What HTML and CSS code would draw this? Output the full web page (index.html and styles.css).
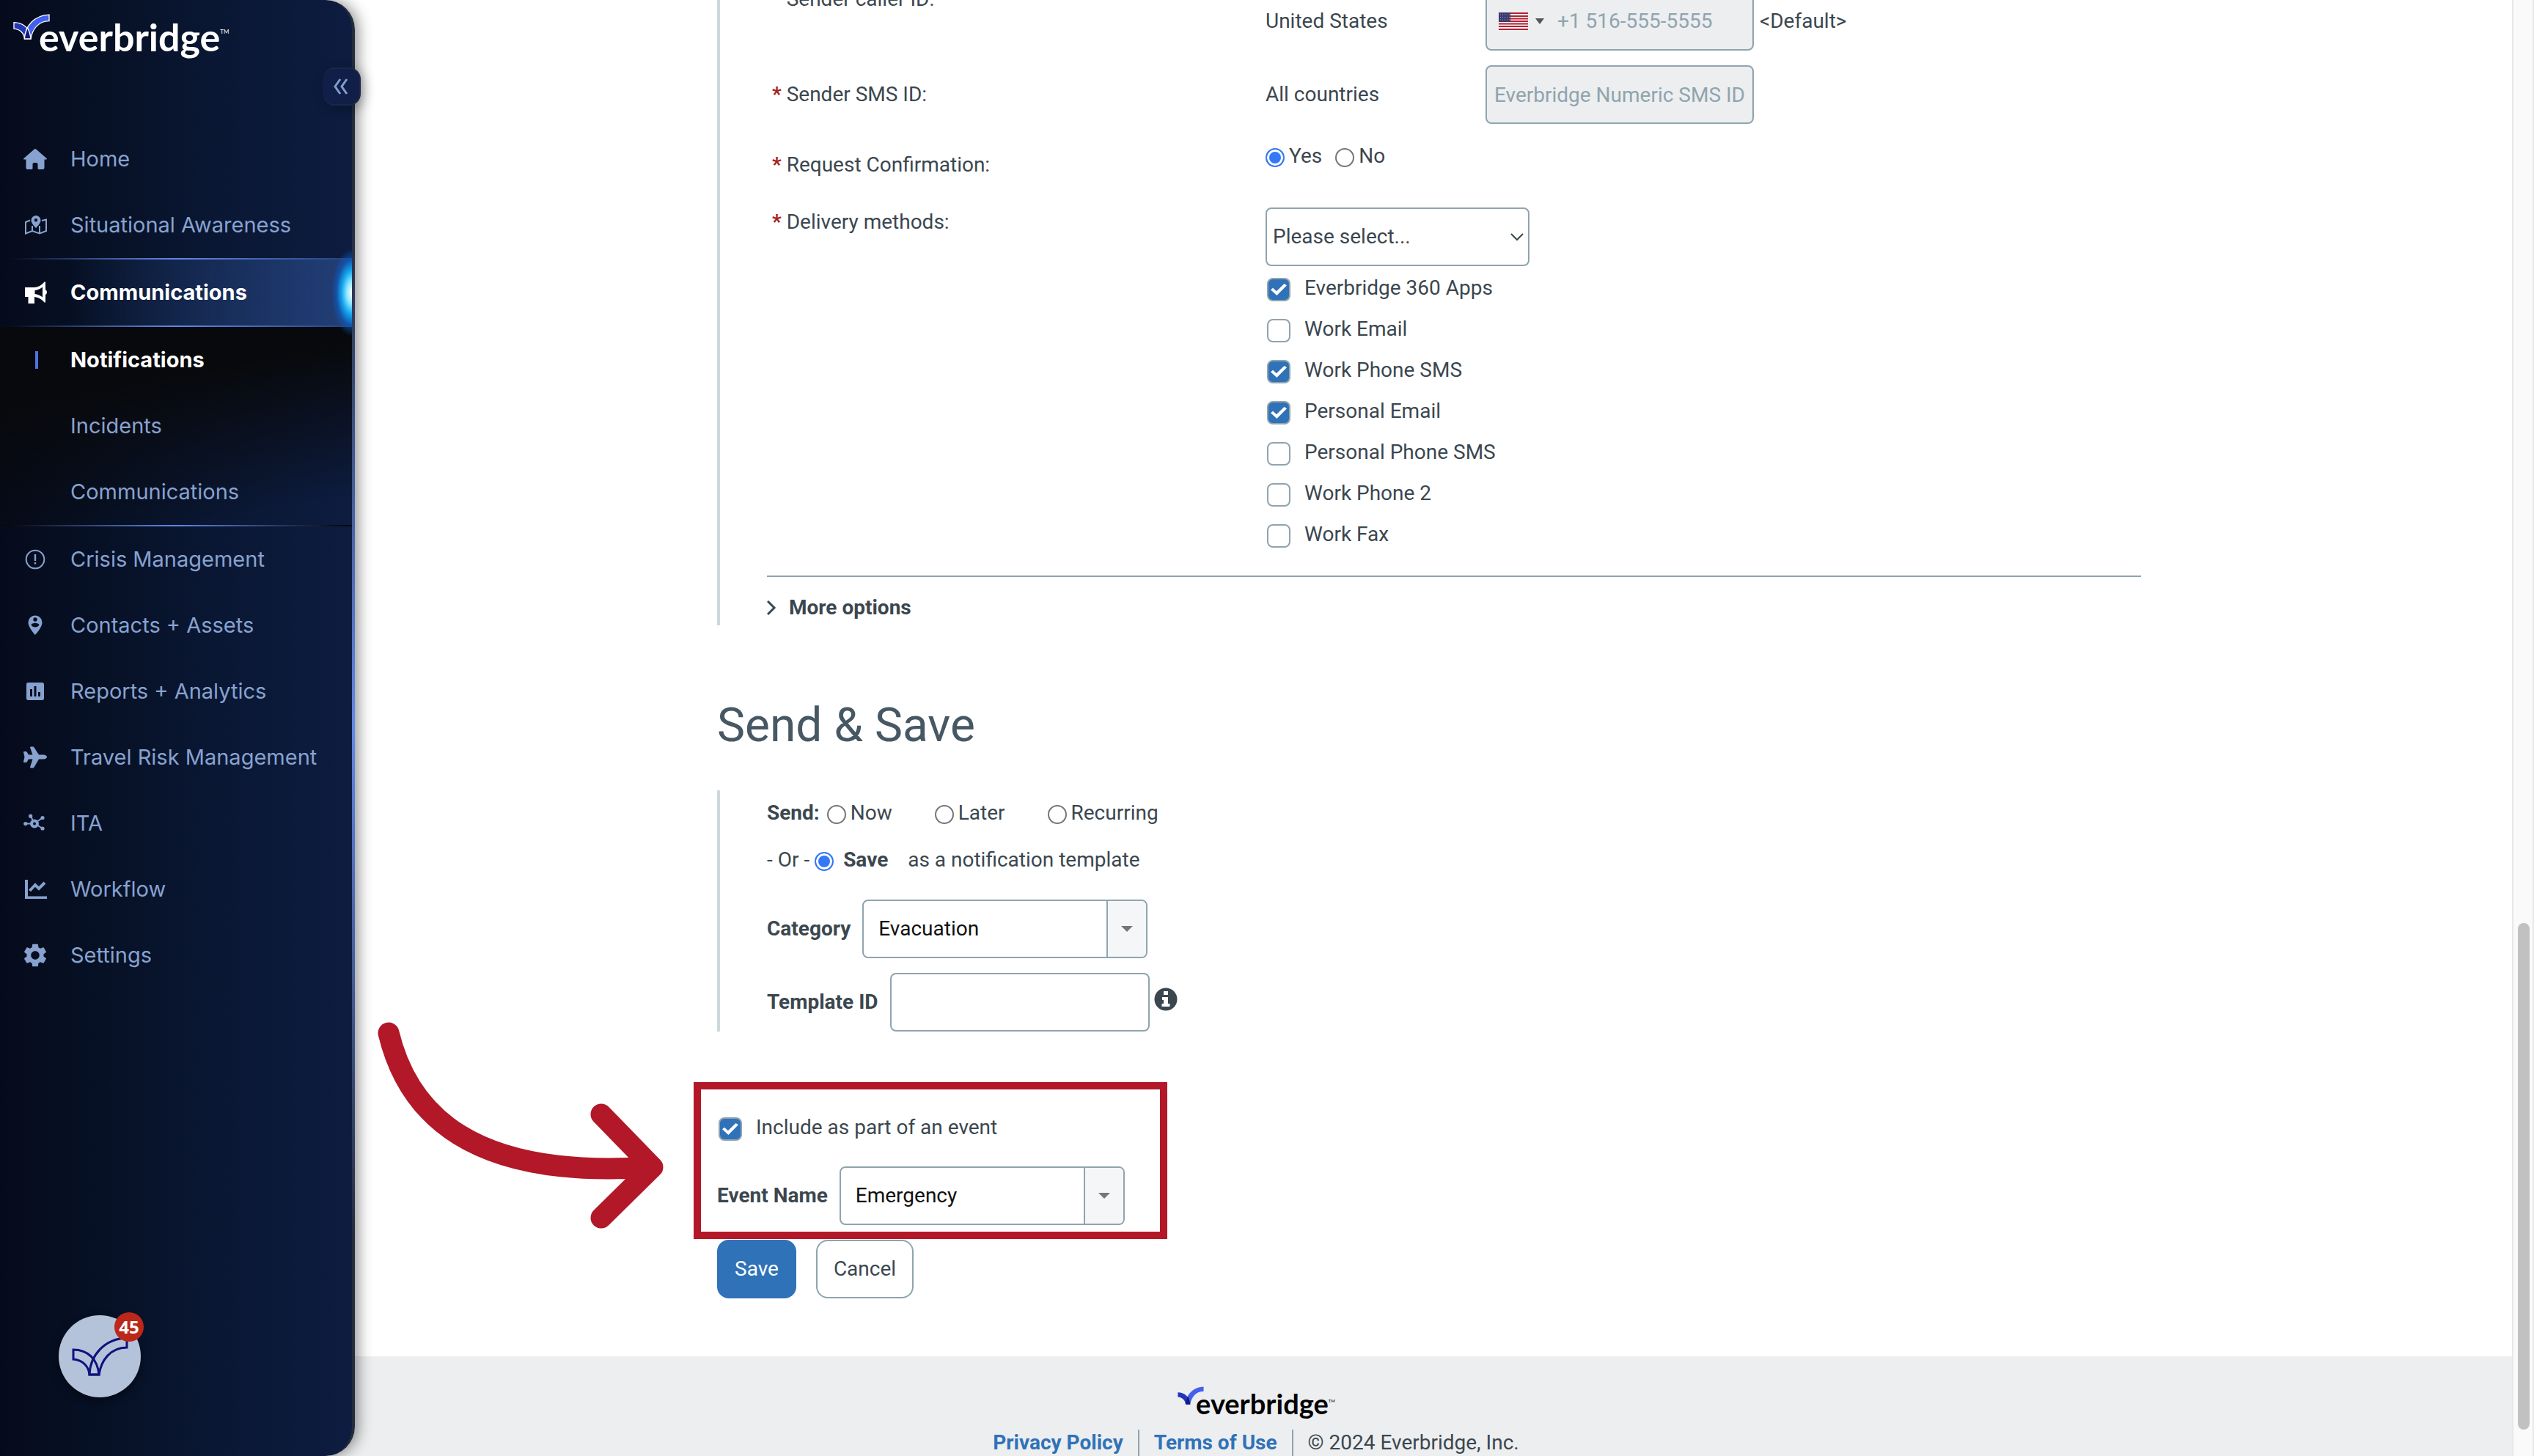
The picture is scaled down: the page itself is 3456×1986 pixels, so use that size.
FILE: index.html
```html
<!DOCTYPE html>
<html lang="en">
<head>
    <meta charset="UTF-8">
    <meta name="viewport" content="width=device-width, initial-scale=1.0">
    <title>Everbridge - Notification Template</title>
    <link rel="stylesheet" href="styles.css">
</head>
<body>
    <!-- Shared shapes -->
    <svg class="defs" width="0" height="0" aria-hidden="true">
        <symbol id="mark" viewBox="17 28 79 56">
            <path class="mark-left" d="M20 47V60C33 61 41 70 42 81H55C53 60 40 47 20 47Z"/>
            <path class="mark-right" d="M93 31V44C70 44 58 62 55 81H42C43 55 62 32 93 31Z"/>
            <path class="mark-base" d="M48 58C45 65 42 72 42 81H55C54 72 52 65 48 58Z"/>
        </symbol>
        <symbol id="mark-outline" viewBox="17 28 79 56">
            <path d="M20 47V60C33 61 41 70 42 81H55C53 60 40 47 20 47Z"/>
            <path d="M93 31V44C70 44 58 62 55 81H42C43 55 62 32 93 31Z"/>
        </symbol>
    </svg>

    <div class="shell">
        <aside class="sidebar">
            <a class="logo" href="#">
                <svg class="logo-mark"><use href="#mark"/></svg>
                <span class="logo-text">everbridge</span><span class="logo-tm">TM</span>
            </a>
            <button class="collapse" type="button" aria-label="Collapse menu">
                <svg width="20" height="22" viewBox="0 0 20 22"><path d="M9 1L2 11l7 10M18 1l-7 10 7 10"/></svg>
            </button>

            <nav class="menu">
                <a class="item" href="#">
                    <svg class="icon" viewBox="0 0 32 32"><path d="M14.800 2.500q1.200-1 2.400 0L31.500 15q.9 1 0 1.500H28.500V28q0 2-2 2H21q-1.500 0-1.500-1.500V23q0-2-2-2h-3q-2 0-2 2v5.500Q12.500 30 11 30H5.500q-2 0-2-2V16.500H.5q-.9-.5 0-1.500z"/></svg>
                    Home
                </a>
                <a class="item" href="#">
                    <svg class="icon" viewBox="0 0 32 32"><path class="line" d="M9 9.500L3 12v15.500l9-3.500 10 3.500 9-3.500V8.500L25 10M12 17v7M22 17v10"/><path d="M17 3a6.500 6.500 0 0 0-6.500 6.500C10.500 14 17 20 17 20s6.500-6 6.500-10.500A6.500 6.500 0 0 0 17 3zm0 4a2.200 2.200 0 1 1 0 4.400A2.200 2.200 0 0 1 17 7z"/></svg>
                    Situational Awareness
                </a>
                <a class="item active" href="#">
                    <svg class="icon" viewBox="0 0 32 32"><path fill-rule="evenodd" d="M2 9h12c6 0 11-3 14.500-7.500H30V12q2 1 2 3.500T30 19v10.500h-1.500C25 25 20 22.500 15 22V31H6.500V22H2zM15.500 13v5c4 .5 7.500 2 10.500 4.500v-14c-3 2.500-6.500 4-10.500 4.500z"/></svg>
                    Communications
                </a>
                <div class="submenu">
                    <a class="item current" href="#">Notifications</a>
                    <a class="item" href="#">Incidents</a>
                    <a class="item" href="#">Communications</a>
                </div>
                <a class="item" href="#">
                    <svg class="icon" viewBox="0 0 32 32"><circle class="line" cx="16" cy="16" r="12.300"/><path d="M14.800 9h2.400v9h-2.400zM14.800 20h2.400v2.600h-2.400z"/></svg>
                    Crisis Management
                </a>
                <a class="item" href="#">
                    <svg class="icon" viewBox="0 0 32 32"><path d="M16 2.500a9.500 9.500 0 0 0-9.500 9.500C6.500 19 16 29 16 29s9.500-10 9.500-17A9.500 9.500 0 0 0 16 2.500zm0 2.800a2.700 2.700 0 1 1 0 5.400 2.700 2.700 0 0 1 0-5.400zm0 13.200c-2.300 0-4.300-1.200-5.500-3 0-1.800 3.700-2.800 5.500-2.800s5.500 1 5.500 2.800c-1.200 1.800-3.200 3-5.500 3z"/></svg>
                    Contacts + Assets
                </a>
                <a class="item" href="#">
                    <svg class="icon" viewBox="0 0 32 32"><path d="M6.500 4h19Q28 4 28 6.500v19q0 2.500-2.500 2.500h-19Q4 28 4 25.500v-19Q4 4 6.500 4zM9 13v10h3V13zm5.500-4v14h3V9zM20 17v6h3v-6z"/></svg>
                    Reports + Analytics
                </a>
                <a class="item" href="#">
                    <svg class="icon" viewBox="0 0 32 32"><path d="M12.500 12.500L9 2.500Q9 1.500 10 1.500h3q1 0 1.500 1l6.500 10h7q4 1 4 3t-4 3h-7l-6.500 11q-.5 1-1.500 1h-3q-1 0-1-1l3.500-11H7l-2.500 4q-.5.500-1 .5H1q-1 0-1-1l1.500-6.500L0 9q0-1 1-1h2.500q.5 0 1 .5l2.500 4z"/></svg>
                    Travel Risk Management
                </a>
                <a class="item" href="#">
                    <svg class="icon" viewBox="0 0 32 32"><path class="line" d="M3 16.500h8M10 6.500l3 6M26 8.500l-8 5.500M26 23l-8-5"/><circle class="ring" cx="15" cy="16.500" r="4"/><circle cx="2.800" cy="16.500" r="2.600"/><circle cx="9.700" cy="6.200" r="2.600"/><circle cx="26" cy="8.500" r="2.600"/><circle cx="26" cy="23" r="2.600"/></svg>
                    ITA
                </a>
                <a class="item" href="#">
                    <svg class="icon" viewBox="0 0 32 32"><path d="M2 3h4v22.500h26V29H2z"/><path class="zigzag" d="M8.500 18l7.500-8 5 5 8-8"/></svg>
                    Workflow
                </a>
                <a class="item" href="#">
                    <svg class="icon" viewBox="2 2 20 20"><path d="M19.140 12.940c.04-.3.06-.61.06-.94 0-.32-.02-.64-.07-.94l2.030-1.580c.18-.14.23-.41.12-.61l-1.920-3.320c-.12-.22-.37-.29-.59-.22l-2.390.96c-.5-.38-1.030-.7-1.620-.94l-.36-2.540c-.04-.24-.24-.41-.48-.41h-3.840c-.24 0-.43.17-.47.41l-.36 2.540c-.59.24-1.130.57-1.620.94l-2.390-.96c-.22-.08-.47 0-.59.22L2.740 8.870c-.12.21-.08.47.12.61l2.030 1.580c-.05.3-.09.63-.09.940s.02.64.07.94l-2.030 1.580c-.18.14-.23.41-.12.61l1.920 3.320c.12.22.37.29.59.22l2.390-.96c.5.38 1.030.7 1.620.94l.36 2.540c.05.24.24.41.48.41h3.840c.24 0 .44-.17.47-.41l.36-2.540c.59-.24 1.130-.56 1.620-.94l2.390.96c.22.08.47 0 .59-.22l1.920-3.320c.12-.22.07-.47-.12-.61l-2.010-1.580zM12 15.600c-1.980 0-3.600-1.620-3.600-3.600s1.620-3.600 3.600-3.600 3.600 1.620 3.600 3.600-1.620 3.600-3.600 3.600z"/></svg>
                    Settings
                </a>
            </nav>

            <button class="assist" type="button" aria-label="Messages">
                <svg class="assist-mark"><use href="#mark-outline"/></svg>
                <span class="badge">45</span>
            </button>
        </aside>

        <div class="page">
            <main class="main">
                <section class="section options">
                    <div class="row">
                        <span class="row-label"><span class="req">*</span> Sender caller ID:</span>
                        <div class="caller">
                            <label class="country" for="caller-id">United States</label>
                            <div class="phone">
                                <svg width="40" height="24" viewBox="0 0 40 24">
                                    <rect width="40" height="24" fill="#f5f5f5"/>
                                    <path d="M0 1h40M0 5h40M0 8.500h40M0 12h40M0 15.500h40M0 19h40M0 23h40" stroke="#b22234" stroke-width="2"/>
                                    <rect width="16" height="13" fill="#3c3b6e"/>
                                    <path d="M2 3h13M2 6.500h13M2 10h13" stroke="#a5a5c8" stroke-dasharray="1 2"/>
                                </svg>
                                <svg width="12" height="8" viewBox="0 0 12 8"><path d="M0 0h12L6 8z" fill="#555"/></svg>
                                <input id="caller-id" type="tel" value="+1 516-555-5555" disabled>
                            </div>
                            <span>&lt;Default&gt;</span>
                        </div>
                    </div>
                    <div class="row row-middle">
                        <span class="row-label"><span class="req">*</span> Sender SMS ID:</span>
                        <div class="sms">
                            <label class="country" for="sms-id">All countries</label>
                            <input class="field" id="sms-id" type="text" value="Everbridge Numeric SMS ID" disabled>
                        </div>
                    </div>
                    <div class="row row-confirm">
                        <span class="row-label"><span class="req">*</span> Request Confirmation:</span>
                        <div class="choices">
                            <label class="choice"><input type="radio" name="confirm" checked> Yes</label>
                            <label class="choice"><input type="radio" name="confirm"> No</label>
                        </div>
                    </div>
                    <div class="row">
                        <label class="row-label" for="delivery"><span class="req">*</span> Delivery methods:</label>
                        <div>
                            <div class="dropdown">
                                <select id="delivery"><option>Please select...</option></select>
                                <svg class="dropdown-arrow" width="18" height="11" viewBox="0 0 18 11"><path d="M1 1l8 8 8-8"/></svg>
                            </div>
                            <div class="methods">
                                <label class="check"><input type="checkbox" checked> Everbridge 360 Apps</label>
                                <label class="check"><input type="checkbox"> Work Email</label>
                                <label class="check"><input type="checkbox" checked> Work Phone SMS</label>
                                <label class="check"><input type="checkbox" checked> Personal Email</label>
                                <label class="check"><input type="checkbox"> Personal Phone SMS</label>
                                <label class="check"><input type="checkbox"> Work Phone 2</label>
                                <label class="check"><input type="checkbox"> Work Fax</label>
                            </div>
                        </div>
                    </div>
                    <hr class="divider">
                    <button class="more" type="button">
                        <svg width="14" height="22" viewBox="0 0 14 22"><path d="M1 2l9 9-9 9"/></svg>
                        More options
                    </button>
                </section>

                <h1>Send &amp; Save</h1>

                <section class="section send">
                    <div class="send-row">
                        <strong>Send:</strong>
                        <label class="choice"><input type="radio" name="send"> Now</label>
                        <label class="choice"><input type="radio" name="send"> Later</label>
                        <label class="choice"><input type="radio" name="send"> Recurring</label>
                    </div>
                    <div class="save-row">
                        <span>- Or -</span>
                        <input id="save-template" type="radio" name="send" checked>
                        <label for="save-template"><strong>Save</strong> <span class="save-note">as a notification template</span></label>
                    </div>
                    <div class="pair">
                        <label for="category"><strong>Category</strong></label>
                        <div class="combo">
                            <select id="category"><option>Evacuation</option></select>
                            <span class="combo-arrow"></span>
                        </div>
                    </div>
                    <div class="pair">
                        <label for="template-id"><strong>Template ID</strong></label>
                        <input class="field template" id="template-id" type="text">
                        <svg class="info" width="32" height="32" viewBox="0 0 32 32"><circle cx="16" cy="16" r="15.500"/><path d="M13 5h6v5h-6zM11 13h8v9h2.500v4h-11v-4H13v-5h-2z" fill="#fff"/></svg>
                    </div>
                </section>

                <section class="event">
                    <svg class="pointer" width="392" height="286" viewBox="0 0 392 286" aria-hidden="true">
                        <path d="M16 16C42 124 126 216 372 199M306 127L376 199L306 268"/>
                    </svg>
                    <label class="check"><input type="checkbox" checked> Include as part of an event</label>
                    <div class="pair">
                        <label for="event-name"><strong>Event Name</strong></label>
                        <div class="combo">
                            <select id="event-name"><option>Emergency</option></select>
                            <span class="combo-arrow"></span>
                        </div>
                    </div>
                </section>

                <div class="actions">
                    <button class="btn primary" type="submit">Save</button>
                    <button class="btn" type="button">Cancel</button>
                </div>
            </main>

            <footer class="footer">
                <div class="logo footer-logo">
                    <svg class="logo-mark"><use href="#mark"/></svg>
                    <span class="logo-text">everbridge</span><span class="logo-tm">TM</span>
                </div>
                <div class="links">
                    <a href="#">Privacy Policy</a>
                    <a href="#">Terms of Use</a>
                    <span>© 2024 Everbridge, Inc.</span>
                </div>
            </footer>
        </div>

        <div class="scrollbar"><div class="thumb"></div></div>
    </div>
</body>
</html>
```
FILE: styles.css
```css
* {
    box-sizing: border-box;
}
body {
    margin: 0;
    font-family: Roboto, sans-serif;
    font-size: 28px;
    line-height: 36px;
    color: #3b474f;
    background: #fff;
}
input, select, button {
    font: inherit;
    color: inherit;
    margin: 0;
}
a {
    text-decoration: none;
}
strong {
    font-weight: 700;
}
.defs {
    display: block;
}

/* The sidebar shares the first cell with the page and floats above it */
.shell {
    display: grid;
    grid-template-columns: 1fr 30px;
    grid-template-rows: 100vh;
    height: 100vh;
    overflow: hidden;
}
.sidebar {
    grid-area: 1 / 1;
    z-index: 2;
    position: relative;
    width: 484px;
    display: flex;
    flex-direction: column;
    border-right: 4px solid transparent;
    border-radius: 0 40px 40px 0;
    background:
        linear-gradient(90deg, #060b1c, #061024 25%, #0a1733 60%, #0d1c40) padding-box,
        linear-gradient(180deg, #232b3c 15%, #6288e8 50%, #232b3c 85%) border-box;
    box-shadow: 4px 0 20px rgba(0, 0, 0, 0.45);
    font-family: Inter, sans-serif;
}
.page {
    grid-area: 1 / 1;
    display: flex;
    flex-direction: column;
    min-width: 0;
}

/* Logo */
.logo {
    display: flex;
    align-items: flex-start;
    color: #fff;
    padding: 18px 0 0 17px;
    height: 172px;
}
.logo-mark {
    width: 52px;
    height: 37px;
    margin-right: -16px;
    stroke: #fff;
    stroke-width: 2;
}
.mark-left {
    fill: #2137b8;
}
.mark-right {
    fill: #4361ee;
}
.mark-base {
    fill: #15187c;
}
.logo-text {
    font: 700 52px/64px Lato, sans-serif;
}
.logo-tm {
    font: 8px/10px Lato, sans-serif;
    padding-top: 20px;
}
.collapse {
    position: absolute;
    top: 92px;
    right: -12px;
    width: 52px;
    height: 52px;
    display: grid;
    place-items: center;
    padding: 0;
    border: 2px solid #1b2746;
    border-left: 0;
    border-radius: 16px;
    background: #111e48;
    box-shadow: 4px 4px 16px rgba(0, 0, 0, 0.3);
}
.collapse path {
    fill: none;
    stroke: #7f9dcc;
    stroke-width: 3;
}

/* Menu */
.menu {
    flex: 1;
    font-size: 29px;
}
.item {
    display: flex;
    align-items: center;
    gap: 32px;
    height: 90px;
    padding-left: 32px;
    color: #88a2cf;
}
.icon {
    width: 32px;
    height: 32px;
    fill: currentColor;
}
.icon .line, .icon .ring, .icon .zigzag {
    fill: none;
    stroke: currentColor;
    stroke-width: 2;
}
.icon .ring, .icon .zigzag {
    stroke-width: 4;
}
.item.active {
    position: relative;
    height: 94px;
    border: 2px solid;
    border-width: 2px 0;
    border-image: linear-gradient(90deg, transparent 3%, #6288e8 50%, #24407a) 1;
    background: linear-gradient(90deg, transparent 20%, #213d74 95%);
    color: #fff;
    font-weight: 700;
}
.item.active::after {
    content: "";
    position: absolute;
    top: -16px;
    bottom: -16px;
    right: 0;
    width: 28px;
    background: radial-gradient(ellipse 28px 60px at 100% 50%, #fff, #8fe9ff 25%, #12a5ee 50%, rgba(12, 96, 200, 0.6) 75%, transparent);
}
.submenu {
    border-bottom: 2px solid;
    border-image: linear-gradient(90deg, transparent 3%, #6288e8 50%, transparent 97%) 1;
    background: linear-gradient(170deg, #08090c 30%, rgba(8, 9, 12, 0) 90%);
}
.submenu .item {
    padding-left: 96px;
}
.submenu .current {
    gap: 44px;
    padding-left: 48px;
    color: #fff;
    font-weight: 700;
}
.current::before {
    content: "";
    width: 4px;
    height: 24px;
    background: #4f74e0;
}
.assist {
    position: relative;
    align-self: flex-start;
    display: grid;
    place-items: center;
    width: 112px;
    height: 112px;
    margin: 0 0 80px 80px;
    padding: 0;
    border: 0;
    border-radius: 50%;
    background: #b4c2da;
    box-shadow: 0 4px 12px rgba(0, 0, 0, 0.5);
}
.assist-mark {
    width: 79px;
    height: 56px;
    fill: none;
    stroke: #10127c;
    stroke-width: 3;
}
.badge {
    position: absolute;
    top: -4px;
    right: -4px;
    width: 40px;
    height: 40px;
    border-radius: 50%;
    background: #bb281a;
    color: #fff;
    font: 700 24px/40px "Open Sans", sans-serif;
}

/* Form */
.main {
    flex: 1 0 auto;
    margin-top: -19px;
    padding-left: 978px;
}
.section {
    width: 1942px;
    max-width: 100%;
    padding-left: 64px;
    border-left: 4px solid #cfd8dc;
}
.options {
    padding-bottom: 6px;
}
.row {
    display: grid;
    grid-template-columns: 680px 1fr;
    align-items: start;
}
.row-label {
    padding-left: 7px;
}
.row-middle {
    align-items: center;
    margin-top: 20px;
}
.row-confirm {
    margin: 26px 0 40px;
}
.row-confirm .row-label {
    padding-top: 12px;
}
.req {
    color: #a62222;
    font-weight: 700;
}
.caller, .sms {
    display: flex;
    align-items: center;
}
.caller {
    padding-top: 8px;
    gap: 8px;
}
.country {
    width: 300px;
}
.caller .country {
    width: 292px;
}
.phone, .field, .dropdown select, .combo select {
    height: 80px;
    border: 2px solid #90a4ae;
    border-radius: 8px;
    background: #fff;
}
.phone {
    display: flex;
    align-items: center;
    gap: 10px;
    width: 366px;
    padding-left: 16px;
    background: #eceef0;
}
.phone input {
    flex: 1;
    min-width: 0;
    padding: 0 0 0 8px;
    border: 0;
    background: none;
    color: #90a4ae;
}
.field {
    width: 366px;
    padding: 0 10px;
}
.field:disabled {
    background: #eceef0;
    color: #90a4ae;
}
.template {
    width: 354px;
}
.choices, .send-row {
    display: flex;
    gap: 18px;
}
.choice {
    display: flex;
    gap: 6px;
}
input[type="radio"], input[type="checkbox"] {
    appearance: none;
    flex: none;
    background: #fff;
}
input[type="radio"] {
    width: 26px;
    height: 26px;
    margin-top: 7px;
    border: 2px solid #767676;
    border-radius: 50%;
}
input[type="radio"]:checked {
    border-color: #3478f6;
    background: #3478f6;
    box-shadow: inset 0 0 0 3px #fff;
}
input[type="checkbox"] {
    display: grid;
    place-items: center;
    width: 32px;
    height: 32px;
    margin: 4px 0 0 2px;
    border: 2px solid #90a4ae;
    border-radius: 8px;
}
input[type="checkbox"]:checked {
    background: #2f72b8;
}
input[type="checkbox"]:checked::before {
    content: "";
    width: 22px;
    height: 16px;
    background: #fff;
    clip-path: polygon(0 52%, 14% 36%, 36% 64%, 84% 0, 100% 14%, 38% 100%);
}
.check {
    display: flex;
    align-items: center;
    gap: 19px;
}
.methods {
    padding-top: 2px;
}
.methods .check {
    height: 56px;
}
.dropdown, .combo {
    position: relative;
}
.dropdown {
    width: 360px;
}
.dropdown select, .combo select {
    appearance: none;
    display: block;
    width: 100%;
}
.dropdown select {
    padding: 0 40px 0 8px;
}
.dropdown-arrow {
    position: absolute;
    top: 35px;
    right: 8px;
    fill: none;
    stroke: #3b474f;
    stroke-width: 2;
    pointer-events: none;
}
.divider {
    height: 2px;
    margin: 28px 0 24px;
    border: 0;
    background: #90a4ae;
}
.more {
    display: flex;
    align-items: center;
    gap: 16px;
    padding: 0;
    border: 0;
    background: none;
    font-weight: 700;
}
.more path {
    fill: none;
    stroke: #3b474f;
    stroke-width: 3;
}
h1 {
    margin: 99px 0 50px;
    font-size: 64px;
    line-height: 76px;
    font-weight: 400;
    color: #465863;
}
.row-confirm + .row .row-label {
    padding-top: 2px;
}
.send {
    padding-top: 13px;
}
.send-row {
    gap: 58px;
}
.send-row strong {
    margin-right: -48px;
}
.save-row {
    display: flex;
    gap: 7px;
    margin: 28px 0 36px;
}
.save-row label {
    padding-left: 6px;
}
.save-note {
    padding-left: 20px;
}
.pair {
    display: flex;
    align-items: center;
    gap: 16px;
}
.pair + .pair {
    margin-top: 20px;
}
.combo {
    width: 389px;
}
.combo select {
    padding: 0 70px 0 20px;
    color: #111;
}
.combo-arrow {
    position: absolute;
    top: 2px;
    right: 2px;
    bottom: 2px;
    width: 54px;
    display: grid;
    place-items: center;
    border-left: 2px solid #90a4ae;
    border-radius: 0 6px 6px 0;
    background: #f5f6f8;
    pointer-events: none;
}
.combo-arrow::before {
    content: "";
    border: 8px solid transparent;
    border-top-color: #777;
    border-bottom: 0;
}
.info {
    margin: 0 0 8px -10px;
    fill: #3b474f;
}
.event {
    position: relative;
    width: 646px;
    margin: 69px 0 1px -32px;
    padding: 34px 0 9px 22px;
    border: 10px solid #b21828;
}
.event .pair {
    margin-top: 35px;
}
.pointer {
    position: absolute;
    top: -93px;
    left: -442px;
    fill: none;
    stroke: #b21828;
    stroke-width: 29;
    stroke-linecap: round;
    stroke-linejoin: round;
}
.actions {
    display: flex;
    gap: 27px;
}
.btn {
    height: 80px;
    padding: 0 22px;
    border: 2px solid #90a4ae;
    border-radius: 16px;
    background: #fff;
}
.btn.primary {
    border-color: #2f72b8;
    background: #2f72b8;
    color: #fff;
}

/* Footer */
.footer {
    display: flex;
    flex-direction: column;
    align-items: center;
    height: 136px;
    padding-top: 40px;
    background: #edeef0;
}
.footer-logo {
    height: 60px;
    padding: 0;
    color: #000;
}
.footer-logo .logo-mark {
    width: 38px;
    height: 27px;
    margin-right: -12px;
    stroke: none;
}
.footer-logo .logo-text {
    font-size: 38px;
    line-height: 48px;
}
.footer-logo .logo-tm {
    font-size: 6px;
    padding-top: 16px;
}
.links {
    display: flex;
}
.links > * {
    padding: 0 20px;
}
.links > * + * {
    border-left: 2px solid #90a4ae;
}
.links a {
    color: #2f72b8;
    font-weight: 700;
}

.scrollbar {
    display: grid;
    grid-template-rows: 1259fr 691fr 36fr;
    padding: 0 4px 0 6px;
    border: 2px solid #e8e8e8;
    border-width: 0 2px;
    background: #fafafa;
}
.thumb {
    grid-row: 2;
    border-radius: 8px;
    background: #c1c1c1;
}
```
